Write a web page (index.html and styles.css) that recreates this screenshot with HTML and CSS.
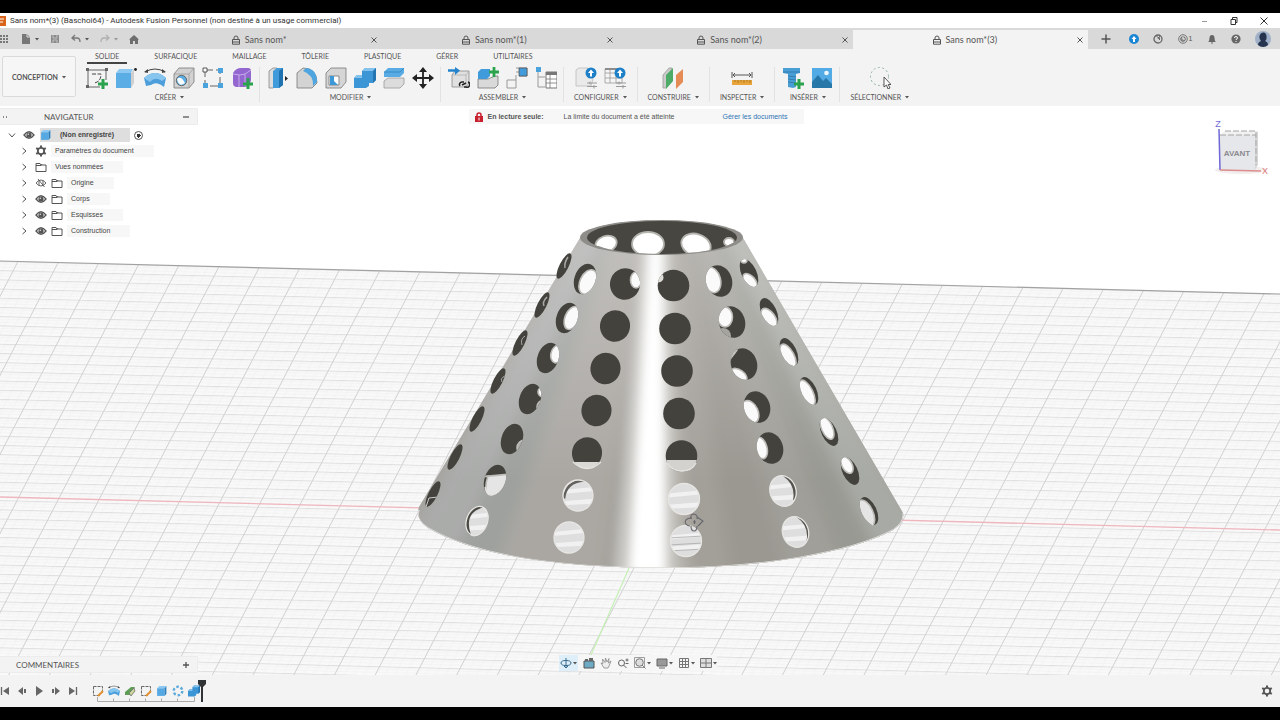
FILE: index.html
```html
<!DOCTYPE html>
<html lang="fr">
<head>
<meta charset="utf-8">
<meta name="viewport" content="width=device-width, initial-scale=1">
<title>Sans nom*(3) - Autodesk Fusion</title>
<link rel="stylesheet" href="styles.css">
</head>
<body>
<svg class="sprite" aria-hidden="true">
  <symbol id="caret" viewBox="0 0 4 4"><path d="M0 1h4L2 3.5z" fill="currentColor"/></symbol>
  <symbol id="lock" viewBox="0 0 10 10"><path d="M1.5 4.5h7v4.700h-7zM3 4.500V3a2 2 0 0 1 4 0v1.500M1.500 7h7" fill="none" stroke="currentColor"/></symbol>
  <symbol id="close" viewBox="0 0 8 8"><path d="M1.500 1.500l5 5M6.500 1.500l-5 5" fill="none" stroke="currentColor"/></symbol>
  <symbol id="cube" viewBox="0 0 22 22"><path d="M2 6l4-4h13l-3 4z" fill="#8cc8f2"/><path d="M2 6h14v14H2z" fill="#55a8e2"/><path d="M16 6l3-4v14l-3 4z" fill="#2d7fbd"/></symbol>
  <symbol id="folder" viewBox="0 0 12 12"><path d="M1 10.500v-8h4l1 1.500h5v6.500zM1 4.500h5l1-1.500" fill="none" stroke="currentColor"/></symbol>
  <symbol id="eye" viewBox="0 0 12 12"><path d="M1 6q5-6.500 10 0q-5 6.500-10 0z" fill="none" stroke="currentColor" stroke-width="1.300"/><circle cx="6" cy="6" r="2.600" fill="currentColor"/><circle cx="5.300" cy="5.300" r=".8" fill="#ddd"/></symbol>
  <symbol id="eye-off" viewBox="0 0 12 12"><path d="M1 6q5-6 10 0q-5 6-10 0zM4 3.500v5M8 3.500v5M3 2l6.500 8" fill="none" stroke="currentColor" stroke-width=".9"/></symbol>
  <symbol id="chev" viewBox="0 0 8 8"><path d="M2.500 1L6 4L2.500 7" fill="none" stroke="currentColor"/></symbol>
  <symbol id="gear" viewBox="0 0 12 12"><circle cx="6" cy="6" r="3.200" fill="none" stroke="currentColor" stroke-width="1.800"/><path d="M6 .5v2M6 9.500v2M1.200 3.200l1.800 1M9 7.800l1.800 1M1.200 8.800L3 7.800M9 4.200l1.800-1" stroke="currentColor" stroke-width="2"/></symbol>

  <symbol id="sketch" viewBox="0 0 22 22"><path d="M2 3h18M2 20h12M2 2v18M20 2v11" fill="none" stroke="#555" stroke-width=".9"/><path d="M0 1h3v3H0zM19 1h3v3h-3zM0 18h3v3H0z" fill="#666"/><path d="M6 7h9q0 8-7 9" fill="none" stroke="#444" stroke-dasharray="4 1.500"/><path d="M17 12v10M12 17h10" stroke="#2ba24c" stroke-width="3"/></symbol>
  <symbol id="extrude" viewBox="0 0 22 22"><path d="M1 6l3-4h14l-2 4z" fill="#8cc8f2"/><path d="M1 6h15v15H1z" fill="#5badE5"/><path d="M16 6l3-4v14l-3 5z" fill="#cfcfcf"/><circle cx="20.500" cy="2.500" r="1.400" fill="#222"/></symbol>
  <symbol id="revolve" viewBox="0 0 22 22"><path d="M1 5Q11-1 21 5" fill="none" stroke="#444"/><path d="M0 5l4-3v4zM22 5l-4-3v4z" fill="#444"/><path d="M0 11Q11 1 22 11l-2 9q-4-3-5-3q-4-2-8 1l-5 1z" fill="#4d9fdb"/><path d="M0 11Q11 1 22 11l-4 3q-7-5-12 1z" fill="#88c5ee"/></symbol>
  <symbol id="hole" viewBox="0 0 22 22"><path d="M1 7l5-6h15v14l-5 6H1z" fill="#d2d2d2" stroke="#777" stroke-width=".8"/><path d="M1 7h15v14M16 7l5-6" fill="none" stroke="#999" stroke-width=".7"/><circle cx="8.500" cy="13.500" r="5.200" fill="#5aaee5" stroke="#666"/><path d="M4 12q4-4 8 4q-6 5-8-4z" fill="#f8fbff"/></symbol>
  <symbol id="pattern" viewBox="0 0 22 22"><path d="M3 3h15v16H3z" fill="none" stroke="#555" stroke-width=".9" stroke-dasharray="8 3"/><path d="M1 1h4v4H1z" fill="#fff" stroke="#555"/><path d="M16 1h5v5h-5zM1 16h5v5H1zM16 16h5v5h-5z" fill="#4aa3dd"/></symbol>
  <symbol id="form" viewBox="0 0 22 22"><path d="M2 6q3-5 8-5h7q3 0 3 3v9q-1 6-6 7H6q-4 0-4-4z" fill="#9367cf"/><path d="M2 7q8 2 12 0l6-4M8 8v12M14 7v12" fill="none" stroke="#c7acec"/><path d="M17 11v11M12 17h10" stroke="#2ba24c" stroke-width="3"/></symbol>
  <symbol id="presspull" viewBox="0 0 22 22"><path d="M2 4l4-3h4v17l-4 3H2z" fill="#ddd" stroke="#888" stroke-width=".8"/><path d="M6 4l4-3h6v17l-4 3H6z" fill="#419bdb"/><path d="M12 4l4-3v17l-4 3z" fill="#1f72b0"/><path d="M18 9l3 2.500-3 2.500z" fill="#222"/></symbol>
  <symbol id="fillet" viewBox="0 0 22 22"><path d="M1 21V6l6-5q14 0 14 15l-5 5z" fill="#d3d3d3" stroke="#777" stroke-width=".8"/><path d="M10 1q11 1 11 14l-4 4Q18 8 7 4z" fill="#4ea5df"/></symbol>
  <symbol id="shell" viewBox="0 0 22 22"><path d="M1 6l5-5h15v14l-5 6H1z" fill="#d5d5d5" stroke="#777" stroke-width=".8"/><path d="M4 9h10v9H4z" fill="#fff" stroke="#888"/><path d="M5 9h4v5l4 4H5z" fill="#3d98d8"/></symbol>
  <symbol id="combine" viewBox="0 0 22 22"><path d="M8 4l3-3h11v12l-3 3h-4v3l-3 2H0V11l3-3h5z" fill="#3c96d6"/><path d="M8 4l3-3h11l-3 3zM0 11l3-3h5v3z" fill="#82c2ec"/><path d="M19 4l3-3v12l-3 3z" fill="#2475b1"/></symbol>
  <symbol id="offset" viewBox="0 0 22 22"><path d="M1 5l4-4h16v5l-4 4H1z" fill="#58abe3"/><path d="M1 5h16l4-4" fill="none" stroke="#2a7db8" stroke-width=".7"/><path d="M1 14l4-3h16v6l-4 4H1z" fill="#dcdcdc" stroke="#999" stroke-width=".8"/></symbol>
  <symbol id="move" viewBox="0 0 22 22"><path d="M11 4v14M4 11h14" stroke="#222" stroke-width="1.800"/><path d="M11 0l4 5H7zM11 22l-4-5h8zM0 11l5-4v8zM22 11l-5 4V7z" fill="#222"/></symbol>
  <symbol id="insert-comp" viewBox="0 0 22 22"><path d="M4 8l3-4h14v12l-3 4H4z" fill="#e0e0e0" stroke="#888" stroke-width=".8"/><path d="M4 8h14v12M18 8l3-4" fill="none" stroke="#aaa" stroke-width=".7"/><path d="M0 3.500h8" stroke="#2384cd" stroke-width="2.500"/><path d="M7 0l5 3.500L7 8z" fill="#2384cd"/><path d="M12 19a2.500 2.500 0 0 1 2-4h2M20 15a2.500 2.500 0 0 1-2 5h-2M14 18l4-2" fill="none" stroke="#222" stroke-width="1.500"/></symbol>
  <symbol id="new-comp" viewBox="0 0 22 22"><path d="M1 12h10l7-3h3v9l-3 3H1z" fill="#d9d9d9" stroke="#777" stroke-width=".8"/><path d="M1 5l3-3h9v7l-3 3H1z" fill="#3f9bda"/><path d="M17 0v10M12 5h10" stroke="#2ba24c" stroke-width="2.800"/></symbol>
  <symbol id="joint" viewBox="0 0 22 22"><path d="M10 13H1v8h9V8M10 5h3" fill="none" stroke="#999"/><path d="M10 1h11v8h-8" fill="none" stroke="#999"/><path d="M13 1h8v8h-8z" fill="#429cdb" stroke="#555" stroke-width=".8"/></symbol>
  <symbol id="bom" viewBox="0 0 22 22"><path d="M1 0h5v5H1z" fill="#4aa3dd"/><path d="M3 5v15h7M3 10h7" fill="none" stroke="#999"/><path d="M11 5h11v16H11z" fill="#fff" stroke="#777"/><path d="M11 5h11v3H11z" fill="#777"/><path d="M11 12h11M11 16h11M15 8v13" stroke="#777" stroke-width=".8"/></symbol>
  <symbol id="config" viewBox="0 0 22 22"><path d="M1 3l3-2h9v5l5 6-2 7H1z" fill="#eaeaea" stroke="#bbb" stroke-width=".8"/><circle cx="16" cy="6" r="5.500" fill="#1c7fc7"/><path d="M16 2.500l3 3.500h-2v3.500h-2V6h-2z" fill="#fff"/><path d="M12 16h10M12 19.500h10M15 14.500v3M19 18v3.500" stroke="#999"/></symbol>
  <symbol id="config-table" viewBox="0 0 22 22"><path d="M1 2h17v14H1zM1 6h17M1 11h17M6 2v14M12 2v14" fill="#f5f5f5" stroke="#999" stroke-width=".8"/><path d="M1 1h15v2H1z" fill="#8c8c8c"/><circle cx="16" cy="6" r="5.500" fill="#1c7fc7"/><path d="M16 2.500l3 3.500h-2v3.500h-2V6h-2z" fill="#fff"/><path d="M12 16h10M12 19.500h10M15 14.500v3M19 18v3.500" stroke="#999"/></symbol>
  <symbol id="plane" viewBox="0 0 22 22"><path d="M1 8l6-7h3v13l-6 7H1z" fill="#ccc" stroke="#999" stroke-width=".8"/><path d="M4 8l7-7v13l-7 8z" fill="#4cab67"/><path d="M14 8l7-6v13l-7 7z" fill="#e58b55"/></symbol>
  <symbol id="measure" viewBox="0 0 22 22"><path d="M1 5v6M21 5v6M2 8h18M4 6L2 8l2 2M18 6l2 2-2 2" fill="none" stroke="#555"/><path d="M1 13h20v5H1z" fill="#e7a53b"/><path d="M4 13v2M7 13v3M10 13v2M13 13v3M16 13v2M19 13v3" stroke="#8b5d10" stroke-width=".6"/></symbol>
  <symbol id="screw" viewBox="0 0 22 22"><path d="M1 1h17v5l-4 1v13l-3 1-5-1V7L1 6z" fill="#4a9ed6"/><path d="M6 9l8 1M6 12l8 1M6 15l8 1M1 5h17" stroke="#286f9f" stroke-width=".7"/><path d="M17 12v10M12 17h10" stroke="#2ba24c" stroke-width="3"/></symbol>
  <symbol id="image" viewBox="0 0 22 22"><path d="M1 1h20v20H1z" fill="#52abe4"/><path d="M1 15l6-7 5 6 3-3 6 6v4H1z" fill="#2777a8"/><circle cx="15.500" cy="6" r="2.300" fill="#eef8ff"/></symbol>
  <symbol id="select" viewBox="0 0 22 22"><circle cx="10.500" cy="9.500" r="9" fill="none" stroke="#8fb0a6" stroke-dasharray="2 2.500"/><path d="M15 10v10l2.500-2 1.500 4 2-1-1.800-3.500H22z" fill="#fff" stroke="#444" stroke-width=".9"/></symbol>
</svg>

<main class="app">
  <header class="titlebar">
    <svg class="app-logo" viewBox="0 0 6 10"><path d="M0 0h6v10H0z" fill="#d9651d"/><path d="M0 3h4M0 6h3" stroke="#fff"/></svg>
    <h1 class="window-title">Sans nom*(3) (Baschoi64) - Autodesk Fusion Personnel (non destiné à un usage commercial)</h1>
    <div class="window-controls">
      <button aria-label="Réduire"><svg class="i8" viewBox="0 0 8 8"><path d="M2 4.500h5" stroke="#999"/></svg></button>
      <button aria-label="Restaurer"><svg class="i8" viewBox="0 0 8 8"><path d="M1 2.500h4.500v5H1zM2.500 2.500v-2H7v5H5.500" fill="none" stroke="#333"/></svg></button>
      <button aria-label="Fermer"><svg class="i8" viewBox="0 0 8 8"><path d="M.5.500l7 7M7.500.5l-7 7" stroke="#333"/></svg></button>
    </div>
  </header>

  <div class="docbar">
    <div class="quick">
      <button aria-label="Panneau"><svg class="i10" viewBox="0 0 10 10"><path d="M0 1h2v2H0zM3 1h2v2H3zM6 1h2v2H6zM0 4h2v2H0zM3 4h2v2H3zM6 4h2v2H6zM0 7h2v2H0zM3 7h2v2H3zM6 7h2v2H6z" fill="#777"/></svg></button>
      <button aria-label="Fichier"><svg class="i10" viewBox="0 0 10 10"><path d="M1 0h5l3 3v7H1z" fill="#777"/><path d="M6 0v3h3" fill="none" stroke="#ddd"/></svg><svg class="caret"><use href="#caret"/></svg></button>
      <button aria-label="Enregistrer"><svg class="i10" viewBox="0 0 10 10"><path d="M1 1h8v8H1z" fill="#8b8b8b"/><path d="M3 1v3h4V1M3 9V6h4v3" fill="none" stroke="#ccc" stroke-width=".8"/></svg></button>
      <button aria-label="Annuler"><svg class="i10" viewBox="0 0 10 10"><path d="M4 1L1 4l3 2.500M1 4h5q3 0 3 4" fill="none" stroke="#777" stroke-width="1.300"/></svg><svg class="caret"><use href="#caret"/></svg></button>
      <button class="off" aria-label="Rétablir"><svg class="i10" viewBox="0 0 10 10"><path d="M6 1l3 3-3 2.500M9 4H4Q1 4 1 8" fill="none" stroke="#888" stroke-width="1.300"/></svg><svg class="caret"><use href="#caret"/></svg></button>
      <button aria-label="Accueil"><svg class="i10" viewBox="0 0 10 10"><path d="M5 1l5 4.500H9V10H6V7H4v3H1V5.500H0z" fill="#6e6e6e"/></svg></button>
    </div>
    <nav class="doctabs" aria-label="Documents">
      <div class="doctab"><button class="doc-name"><svg class="i10"><use href="#lock"/></svg>Sans nom*</button><button class="doc-close" aria-label="Fermer l’onglet"><svg class="i8"><use href="#close"/></svg></button></div>
      <div class="doctab"><button class="doc-name"><svg class="i10"><use href="#lock"/></svg>Sans nom*(1)</button><button class="doc-close" aria-label="Fermer l’onglet"><svg class="i8"><use href="#close"/></svg></button></div>
      <div class="doctab"><button class="doc-name"><svg class="i10"><use href="#lock"/></svg>Sans nom*(2)</button><button class="doc-close" aria-label="Fermer l’onglet"><svg class="i8"><use href="#close"/></svg></button></div>
      <div class="doctab current"><button class="doc-name"><svg class="i10"><use href="#lock"/></svg>Sans nom*(3)</button><button class="doc-close" aria-label="Fermer l’onglet"><svg class="i8"><use href="#close"/></svg></button></div>
    </nav>
    <div class="account">
      <button class="new-doc" aria-label="Nouveau document"><svg class="i10" viewBox="0 0 10 10"><path d="M5 .5v9M.5 5h9" stroke="#555" stroke-width="1.500"/></svg></button>
      <button aria-label="Mises à jour"><svg class="i10" viewBox="0 0 10 10"><circle cx="5" cy="5" r="5" fill="#1a86d4"/><path d="M5 2l2.500 3H6v3H4V5H2.500z" fill="#fff"/></svg></button>
      <button aria-label="Extensions"><svg class="i10" viewBox="0 0 10 10"><circle cx="5" cy="5" r="4" fill="none" stroke="#666" stroke-width="1.300"/><path d="M3.500 2.500L6.500 4V6M7 2l-2 3" fill="none" stroke="#666"/></svg></button>
      <button class="jobs" aria-label="État des tâches"><svg class="i10" viewBox="0 0 10 10"><circle cx="5" cy="5" r="4.300" fill="none" stroke="#777"/><circle cx="5" cy="5" r="2.300" fill="#999" stroke="#666"/><path d="M5 2.500V5h2" fill="none" stroke="#eee"/></svg>1</button>
      <button aria-label="Notifications"><svg class="i10" viewBox="0 0 10 10"><path d="M1 8q1.500-1 1.500-4Q2.500 1 5 1t2.500 3Q7.500 7 9 8zM4 8.500h2v1H4z" fill="#666"/></svg></button>
      <button aria-label="Aide"><svg class="i10" viewBox="0 0 10 10"><circle cx="5" cy="5" r="4.600" fill="#666"/><path d="M3.500 4q0-1.500 1.500-1.500T6.500 4Q6.500 5 5 5.500V6M5 7v1" fill="none" stroke="#fff"/></svg></button>
      <button aria-label="Profil"><svg class="i16" viewBox="0 0 16 16"><circle cx="8" cy="8" r="8" fill="#9fb0c8"/><path d="M3 14q0-3 3-4Q4 8 4.500 5T8 1.500 11.500 5 10 10q3 1 3 4-5 4-10 0z" fill="#26344f"/></svg></button>
    </div>
  </div>

  <section class="ribbon" aria-label="Barre d’outils">
    <button class="workspace">CONCEPTION<svg class="caret"><use href="#caret"/></svg></button>
    <div class="ribbon-body">
      <nav class="ribbon-tabs" aria-label="Onglets d’outils">
        <button class="current">SOLIDE</button><button>SURFACIQUE</button><button>MAILLAGE</button><button>TÔLERIE</button><button>PLASTIQUE</button><button>GÉRER</button><button>UTILITAIRES</button>
      </nav>
      <div class="groups">
        <div class="group"><div class="tools">
          <button aria-label="Esquisse"><svg class="i22"><use href="#sketch"/></svg></button><button aria-label="Extrusion"><svg class="i22"><use href="#extrude"/></svg></button><button aria-label="Révolution"><svg class="i22"><use href="#revolve"/></svg></button><button aria-label="Trou"><svg class="i22"><use href="#hole"/></svg></button><button aria-label="Réseau"><svg class="i22"><use href="#pattern"/></svg></button><button aria-label="Forme"><svg class="i22"><use href="#form"/></svg></button>
        </div><button class="group-name">CRÉER<svg class="caret"><use href="#caret"/></svg></button></div>
        <div class="group"><div class="tools">
          <button aria-label="Appuyer/Tirer"><svg class="i22"><use href="#presspull"/></svg></button><button aria-label="Congé"><svg class="i22"><use href="#fillet"/></svg></button><button aria-label="Coque"><svg class="i22"><use href="#shell"/></svg></button><button aria-label="Combiner"><svg class="i22"><use href="#combine"/></svg></button><button aria-label="Décaler la face"><svg class="i22"><use href="#offset"/></svg></button><button aria-label="Déplacer"><svg class="i22"><use href="#move"/></svg></button>
        </div><button class="group-name">MODIFIER<svg class="caret"><use href="#caret"/></svg></button></div>
        <div class="group"><div class="tools">
          <button aria-label="Insérer un composant"><svg class="i22"><use href="#insert-comp"/></svg></button><button aria-label="Nouveau composant"><svg class="i22"><use href="#new-comp"/></svg></button><button aria-label="Liaison"><svg class="i22"><use href="#joint"/></svg></button><button aria-label="Nomenclature"><svg class="i22"><use href="#bom"/></svg></button>
        </div><button class="group-name">ASSEMBLER<svg class="caret"><use href="#caret"/></svg></button></div>
        <div class="group wide"><div class="tools">
          <button aria-label="Configurer la conception"><svg class="i22"><use href="#config"/></svg></button><button aria-label="Table de configuration"><svg class="i22"><use href="#config-table"/></svg></button>
        </div><button class="group-name">CONFIGURER<svg class="caret"><use href="#caret"/></svg></button></div>
        <div class="group wide"><div class="tools"><button aria-label="Plan de décalage"><svg class="i22"><use href="#plane"/></svg></button></div><button class="group-name">CONSTRUIRE<svg class="caret"><use href="#caret"/></svg></button></div>
        <div class="group wide"><div class="tools"><button aria-label="Mesurer"><svg class="i22"><use href="#measure"/></svg></button></div><button class="group-name">INSPECTER<svg class="caret"><use href="#caret"/></svg></button></div>
        <div class="group"><div class="tools"><button aria-label="Insérer une fixation"><svg class="i22"><use href="#screw"/></svg></button><button aria-label="Insérer une image"><svg class="i22"><use href="#image"/></svg></button></div><button class="group-name">INSÉRER<svg class="caret"><use href="#caret"/></svg></button></div>
        <div class="group wide"><div class="tools"><button aria-label="Sélection"><svg class="i22"><use href="#select"/></svg></button></div><button class="group-name">SÉLECTIONNER<svg class="caret"><use href="#caret"/></svg></button></div>
      </div>
    </div>
  </section>

  <section class="viewport" aria-label="Vue 3D">
    <svg class="scene" viewBox="0 106 1280 569" preserveAspectRatio="xMidYMid slice">
      <defs>
        <pattern id="grid" width="40.200" height="9.080" patternUnits="userSpaceOnUse" patternTransform="matrix(1 .0256 -.515 1 17.500 261.400)">
          <path d="M0 3h40.200M0 6h40.200M10 0v9.080M20 0v9.080M30 0v9.080" stroke="#f0f0f0" stroke-width=".6"/>
          <path d="M0 .5h40.200" stroke="#dfdfdf" stroke-width=".9"/>
          <path d="M.5 0v9.080" stroke="#d0d0d0"/>
        </pattern>
        <clipPath id="body"><path d="M580 238L419 507Q415 519 428 528C480 558 570 568 665 568C760 568 850 553 893 530Q905 522 903 513L743 238Q735 222 661 220Q588 222 580 238z"/></clipPath>
        <clipPath id="mouth"><ellipse cx="662" cy="237.500" rx="75" ry="16.500"/></clipPath>
        <clipPath id="cC"><circle r="15.800"/></clipPath>
        <clipPath id="cL"><ellipse rx="15" ry="15.700" transform="rotate(15)"/></clipPath>
        <clipPath id="cO"><ellipse rx="10.500" ry="15.700" transform="rotate(20)"/></clipPath>
        <clipPath id="cF"><ellipse rx="4.500" ry="14" transform="rotate(27)"/></clipPath>
        <clipPath id="cR"><ellipse rx="13" ry="16" transform="rotate(-18)"/></clipPath>
        <clipPath id="cS"><ellipse rx="7.500" ry="15" transform="rotate(-25)"/></clipPath>
        <linearGradient id="lift" x1="0" y1="0" x2="0" y2="1"><stop offset="0" stop-color="#fff" stop-opacity=".3"/><stop offset=".75" stop-color="#fff" stop-opacity="0"/></linearGradient>
        <filter id="soft" x="-10%" y="-10%" width="120%" height="120%"><feGaussianBlur stdDeviation="7"/></filter>
        <filter id="glow" x="-100%" y="-10%" width="300%" height="120%"><feGaussianBlur stdDeviation="5"/></filter>
        <g id="floor"><path d="M-20-20h40v40h-40z" fill="#dededf"/><path d="M-20-5l40-4v4l-40 4zM-20 6l40-3v5l-40 2z" fill="#f1f1f2"/></g>
        <g id="dark"><path d="M-20-20h40v40h-40z" fill="#43423d"/></g>
      </defs>
      <path d="M0 106h1280v569H0z" fill="#fff"/>
      <path d="M0 261L1280 294V675H0z" fill="#f9f9f9"/>
      <path d="M0 261L1280 294V675H0z" fill="url(#grid)"/>
      <path d="M0 261L1280 294" stroke="#a2a2a2" stroke-width="1.200"/>
      <path d="M0 497L1280 530" stroke="#eeb6bd" stroke-width="1.300"/>
      <path d="M629 568L591 655" stroke="#c4f0b4" stroke-width="1.200"/>

      <g clip-path="url(#body)">
        <path d="M400 200h520v380H400z" fill="#a4a19c"/>
        <g filter="url(#soft)">
          <path d="M661 103L370 600H440z" fill="#aaacaa"/>
          <path d="M661 103L435 600H490z" fill="#9fa19e"/>
          <path d="M661 103L485 600H555z" fill="#aaa7a3"/>
          <path d="M661 103L550 600H600z" fill="#aba7a2"/>
          <path d="M661 103L598 600H622z" fill="#a5a39e"/>
          <path d="M661 103L664 600H695z" fill="#b8b5af"/>
          <path d="M661 103L690 600H740z" fill="#a39f99"/>
          <path d="M661 103L735 600H800z" fill="#9b9892"/>
          <path d="M661 103L795 600H860z" fill="#a09f99"/>
          <path d="M661 103L855 600H905z" fill="#989992"/>
          <path d="M661 103L900 600H960z" fill="#a8aaa5"/>
        </g>
        <g filter="url(#glow)">
          <path d="M645 200L612 600H676L668 200z" fill="#d6d5d1" opacity=".7"/>
          <path d="M652 200L627 600H666L662 200z" fill="#fff"/>
        </g>
        <path d="M400 220h520v350H400z" fill="url(#lift)"/>
        <path d="M419 510Q415 520 428 528C480 558 570 568 665 568C760 568 850 553 893 530Q905 522 903 513" fill="none" stroke="#dededa" stroke-width="1.500"/>
      </g>
      <ellipse cx="661.500" cy="237.500" rx="81.500" ry="17.500" fill="#8e8d89"/>
      <g clip-path="url(#mouth)">
        <path d="M580 215h165v45H580z" fill="#474641"/>
        <g fill="#fff" stroke="#b4b3ae" stroke-width="1.800">
          <ellipse cx="606" cy="244" rx="11" ry="8" transform="rotate(-20 606 244)"/><ellipse cx="648" cy="244" rx="16" ry="12"/><ellipse cx="696" cy="245" rx="15" ry="11" transform="rotate(18 696 245)"/><ellipse cx="729" cy="242" rx="5" ry="4"/>
        </g>
      </g>

      <g transform="translate(564 266)" clip-path="url(#cF)"><use href="#dark"/><path d="M4-9q-4 6-3 11" fill="none" stroke="#aaa" stroke-width="1.500"/></g>
      <g transform="translate(542 305)" clip-path="url(#cF)"><use href="#dark"/><path d="M5-8q-5 5-3 9" fill="none" stroke="#aaa" stroke-width="1.500"/></g>
      <g transform="translate(520 343)" clip-path="url(#cF)"><use href="#dark"/><path d="M5-7q-5 3-3 9" fill="none" stroke="#aaa"/></g>
      <g transform="translate(498 381)" clip-path="url(#cF)"><use href="#dark"/><path d="M7-5q-5 2-3 6" fill="none" stroke="#aaa"/></g>
      <g transform="translate(477 419)" clip-path="url(#cF)"><use href="#dark"/></g>
      <g transform="translate(455 457)" clip-path="url(#cF)"><use href="#dark"/></g>
      <g transform="translate(433 494)" clip-path="url(#cF)"><use href="#dark"/><path d="M5 3l-9 1-3 9" fill="none" stroke="#ccc"/></g>

      <g fill="#fafafa" stroke="#bdbcb8" stroke-width="1.600">
        <g transform="translate(585 279)" clip-path="url(#cO)"><use href="#dark" stroke="none"/><ellipse cx="3" cy="3" rx="8" ry="13" transform="rotate(25 3 3)"/></g>
        <g transform="translate(567 318)" clip-path="url(#cO)"><use href="#dark" stroke="none"/><ellipse cx="5" cy="0" rx="7" ry="12" transform="rotate(22 5 0)"/></g>
        <g transform="translate(548 358)" clip-path="url(#cO)"><use href="#dark" stroke="none"/><ellipse cx="9" cy="-4" rx="6" ry="9" transform="rotate(15 9 -4)"/></g>
        <g transform="translate(530 399)" clip-path="url(#cO)"><use href="#dark" stroke="none"/><circle cx="13" cy="-7" r="5"/><circle cx="14" cy="8" r="7" fill="#adaba8"/></g>
        <g transform="translate(512 439)" clip-path="url(#cO)"><use href="#dark" stroke="none"/><circle cx="13" cy="9" r="8" fill="#adaba8"/></g>
        <g transform="translate(495 480)" clip-path="url(#cO)"><use href="#dark" stroke="none"/><path d="M-16 -3L16-6V18H-8Q-11 7-7-4z" fill="#e5e5e6"/></g>
        <g transform="translate(477 521)" clip-path="url(#cO)"><use href="#floor" stroke="none"/><path d="M8-14q-22 5-14 28l-8 2v-32z" fill="#4b4a45" stroke="none"/></g>
        <g transform="translate(625 284)" clip-path="url(#cL)"><use href="#dark" stroke="none"/><ellipse cx="11" cy="-4" rx="5.500" ry="8"/></g>
        <g transform="translate(719 281)" clip-path="url(#cR)"><use href="#dark" stroke="none"/><ellipse cx="-7" cy="-1" rx="8.500" ry="13" transform="rotate(-15 -7 -1)"/></g>
        <g transform="translate(732 322)" clip-path="url(#cR)"><use href="#dark" stroke="none"/><ellipse cx="-7" cy="-5" rx="7.500" ry="10"/><circle cx="-9" cy="14" r="8" fill="#a6a49f" stroke="none"/></g>
        <g transform="translate(744 364)" clip-path="url(#cR)"><use href="#dark" stroke="none"/><path d="M-13-6q4-5 6-8l-10-3v17z"/><ellipse cx="-5" cy="11" rx="9" ry="5" transform="rotate(35 -5 11)"/></g>
        <g transform="translate(757 407)" clip-path="url(#cR)"><use href="#dark" stroke="none"/><ellipse cx="-7" cy="5" rx="8" ry="12" transform="rotate(-25 -7 5)"/></g>
        <g transform="translate(770 448)" clip-path="url(#cR)"><use href="#dark" stroke="none"/><ellipse cx="-9" cy="0" rx="6" ry="11" transform="rotate(-15 -9 0)"/></g>
        <g transform="translate(749 273)" clip-path="url(#cS)"><use href="#dark" stroke="none"/><ellipse cx="1" cy="8" rx="5" ry="9" transform="rotate(-42 1 8)"/><circle cx="-5" cy="-13" r="3"/></g>
        <g transform="translate(769 312)" clip-path="url(#cS)"><use href="#dark" stroke="none"/><ellipse cx="0" cy="6" rx="6" ry="11" transform="rotate(-35 0 6)"/></g>
        <g transform="translate(789 352)" clip-path="url(#cS)"><use href="#dark" stroke="none"/><ellipse cx="-1" cy="4" rx="6" ry="13" transform="rotate(-28 -1 4)"/></g>
        <g transform="translate(809 391)" clip-path="url(#cS)"><use href="#dark" stroke="none"/><ellipse cx="-2" cy="2" rx="6" ry="14" transform="rotate(-26 -2 2)"/></g>
        <g transform="translate(829 432)" clip-path="url(#cS)"><use href="#dark" stroke="none"/><ellipse cx="-2" cy="-4" rx="5.500" ry="12" transform="rotate(-24 -2 -4)"/></g>
        <g transform="translate(850 471)" clip-path="url(#cS)"><use href="#dark" stroke="none"/><ellipse cx="-3" cy="-6" rx="5" ry="9" transform="rotate(-28 -3 -6)"/></g>
        <g transform="translate(869 511)" clip-path="url(#cS)"><use href="#dark" stroke="none"/><ellipse cx="-3" cy="2" rx="7" ry="14" transform="rotate(-25 -3 2)" fill="#e5e5e6"/></g>
      </g>
      <g transform="translate(615 326)" clip-path="url(#cL)"><use href="#dark"/></g>
      <g transform="translate(605.500 368.500)" clip-path="url(#cL)"><use href="#dark"/></g>
      <g transform="translate(596.500 410.500)" clip-path="url(#cL)"><use href="#dark"/></g>
      <g transform="translate(587 453)" clip-path="url(#cL)"><use href="#dark"/><path d="M-20 9h40v12h-40z" fill="#dad9d6"/></g>
      <g transform="translate(578 495.500)" clip-path="url(#cL)"><use href="#floor"/><path d="M6-15Q-12-14-14 3" fill="none" stroke="#63615c" stroke-width="2.500"/></g>
      <g transform="translate(569 537.500)" clip-path="url(#cL)"><use href="#floor"/></g>
      <g transform="translate(673.500 285.500)" clip-path="url(#cC)"><use href="#dark"/><circle cx="-15" cy="-8" r="5" fill="#deddd9"/></g>
      <g transform="translate(675 328.500)" clip-path="url(#cC)"><use href="#dark"/></g>
      <g transform="translate(677 371)" clip-path="url(#cC)"><use href="#dark"/></g>
      <g transform="translate(679 413.500)" clip-path="url(#cC)"><use href="#dark"/></g>
      <g transform="translate(681.500 456)" clip-path="url(#cC)"><use href="#dark"/><path d="M-20 4h40v15h-40z" fill="#d3d2cf"/></g>
      <g transform="translate(684 499)" clip-path="url(#cC)"><use href="#floor"/></g>
      <g transform="translate(686 541)" clip-path="url(#cC)"><use href="#floor"/><path d="M-18-3l36-2M-18 4l36-2M-18 10l36-2" stroke="#aaa" stroke-width=".8"/></g>
      <g transform="translate(783 491)" clip-path="url(#cR)"><use href="#floor"/><path d="M0-15q13 9 10 24l8-3v-24z" fill="#57554f"/></g>
      <g transform="translate(795.500 532)" clip-path="url(#cR)"><use href="#floor"/><path d="M1-15q13 9 10 24l8-3v-24z" fill="#57554f"/></g>
      <g fill="none" stroke="#e6e5e2" stroke-width="1.300">
        <ellipse cx="578" cy="495.500" rx="15" ry="15.500"/><ellipse cx="569" cy="537.500" rx="15" ry="15.500"/>
        <circle cx="684" cy="499" r="15.500"/><circle cx="686" cy="541" r="15.500"/>
        <ellipse cx="783" cy="491" rx="13" ry="15.500" transform="rotate(-18 783 491)"/><ellipse cx="795.500" cy="532" rx="13" ry="15.500" transform="rotate(-18 795.500 532)"/>
        <ellipse cx="477" cy="521" rx="10.500" ry="15" transform="rotate(20 477 521)"/>
        <path d="M485 487q2 9 7 8 8-2 12-14M573 462q14 13 28 0M667 463q5 8 15 8t14-8M861 502q1 15 12 23"/>
      </g>
      <path d="M690 526a5 3.500 0 1 1 2-8M697 517l6 4-5 5M691 519q-1-5 3-5 4 1 3 5M691 526q0 5 3 5t3-5M693 522h3M694.500 520v4" fill="none" stroke="#66666c" stroke-width="1.100"/>
    </svg>

    <aside class="browser">
      <header class="panel-head"><span class="grip"></span><h2>NAVIGATEUR</h2><button class="end" aria-label="Réduire le navigateur"><svg class="i8" viewBox="0 0 8 8"><path d="M1 4h6" stroke="#555" stroke-width="1.300"/></svg></button></header>
      <ul class="tree">
        <li class="root"><button aria-label="Développer"><svg class="i8 down"><use href="#chev"/></svg></button><svg class="i12"><use href="#eye"/></svg><span class="chip"><svg class="i12"><use href="#cube"/></svg>(Non enregistré)</span><label class="activate"><input type="radio" name="active" aria-label="Activer le composant" checked></label></li>
        <li><button aria-label="Développer"><svg class="i8"><use href="#chev"/></svg></button><svg class="i12"><use href="#gear"/></svg><span class="chip">Paramètres du document</span></li>
        <li><button aria-label="Développer"><svg class="i8"><use href="#chev"/></svg></button><svg class="i12"><use href="#folder"/></svg><span class="chip">Vues nommées</span></li>
        <li><button aria-label="Développer"><svg class="i8"><use href="#chev"/></svg></button><svg class="i12"><use href="#eye-off"/></svg><svg class="i12"><use href="#folder"/></svg><span class="chip">Origine</span></li>
        <li><button aria-label="Développer"><svg class="i8"><use href="#chev"/></svg></button><svg class="i12"><use href="#eye"/></svg><svg class="i12"><use href="#folder"/></svg><span class="chip">Corps</span></li>
        <li><button aria-label="Développer"><svg class="i8"><use href="#chev"/></svg></button><svg class="i12"><use href="#eye"/></svg><svg class="i12"><use href="#folder"/></svg><span class="chip">Esquisses</span></li>
        <li><button aria-label="Développer"><svg class="i8"><use href="#chev"/></svg></button><svg class="i12"><use href="#eye"/></svg><svg class="i12"><use href="#folder"/></svg><span class="chip">Construction</span></li>
      </ul>
    </aside>

    <div class="banner">
      <svg class="i10" viewBox="0 0 10 10"><path d="M1 4h8v6H1z" fill="#c8202f"/><path d="M3 4V3a2 2 0 0 1 4 0v1" fill="none" stroke="#c8202f" stroke-width="1.500"/><path d="M5 5.500v3" stroke="#fff"/></svg>
      <strong>En lecture seule:</strong><span>La limite du document a été atteinte</span><a href="#documents">Gérer les documents</a>
    </div>

    <svg class="viewcube" viewBox="0 0 64 64" role="img" aria-label="Vue avant">
      <ellipse cx="33" cy="54" rx="26" ry="4" fill="#f2eeee"/>
      <path d="M12 19h35v35H12z" fill="#e6e7ea"/><path d="M12 19l5-4h33l-3 4z" fill="#f1f1f1"/><path d="M47 19l3-4v34l-3 5z" fill="#d8d8da"/>
      <path d="M12 19h36M17 15h31v34" fill="none" stroke="#a5a5a5" stroke-dasharray="6 2"/>
      <path d="M11 13l1 41" stroke="#7068d6" stroke-width="1.500"/><path d="M12 54l41 1" stroke="#dc8c8c" stroke-width="1.300"/>
      <text x="29" y="40" class="cube-face">AVANT</text><text x="10" y="11" class="cube-z">Z</text><text x="57" y="58" class="cube-x">X</text>
    </svg>

    <section class="comments panel-head"><h2>COMMENTAIRES</h2><button class="end" aria-label="Ajouter un commentaire"><svg class="i8" viewBox="0 0 8 8"><path d="M4 1v6M1 4h6" stroke="#555" stroke-width="1.300"/></svg></button></section>

    <div class="navtools">
      <button class="active" aria-label="Orbite"><svg class="i12" viewBox="0 0 12 12"><ellipse cx="6" cy="6" rx="5" ry="2.500" fill="none" stroke="#386b8c"/><path d="M6 1v9M4 9l2 2 2-2" fill="none" stroke="#386b8c"/></svg><svg class="caret"><use href="#caret"/></svg></button>
      <button aria-label="Regarder"><svg class="i12" viewBox="0 0 12 12"><path d="M1 4h10v7H1z" fill="#6eaac4" stroke="#555"/><path d="M2 2h3v2H2zM6 1h4v3H6z" fill="#666"/></svg></button>
      <button aria-label="Panoramique"><svg class="i12" viewBox="0 0 12 12"><path d="M4 11L1 6l2 .5L2.500 2 5 5.500 5.500 1 7 5l2-3.500L8.500 6 11 4 9 9l-1 2z" fill="#eee" stroke="#888" stroke-width=".8"/></svg></button>
      <button aria-label="Zoom"><svg class="i12" viewBox="0 0 12 12"><circle cx="4.500" cy="6" r="3" fill="none" stroke="#666"/><path d="M6.500 8l3 3M8.500 3h3M10 1.500v3M8.500 6.500h3" stroke="#666"/></svg></button>
      <button aria-label="Ajuster"><svg class="i12" viewBox="0 0 12 12"><path d="M.5.500h10v10H.5z" fill="none" stroke="#888" stroke-width=".8"/><circle cx="5.500" cy="5.500" r="3.800" fill="#ddd" stroke="#777"/><path d="M8 8l3.500 3.500" stroke="#777"/></svg><svg class="caret"><use href="#caret"/></svg></button>
      <button aria-label="Affichage"><svg class="i12" viewBox="0 0 12 12"><path d="M1 2h10v7H1z" fill="#999" stroke="#666"/><path d="M3 11h6" stroke="#666"/></svg><svg class="caret"><use href="#caret"/></svg></button>
      <button aria-label="Grille"><svg class="i12" viewBox="0 0 12 12"><path d="M1.500 1.500h9v9h-9zM1.500 4.500h9M1.500 7.500h9M4.500 1.500v9M7.500 1.500v9" fill="none" stroke="#777"/></svg><svg class="caret"><use href="#caret"/></svg></button>
      <button aria-label="Fenêtres"><svg class="i12" viewBox="0 0 12 12"><path d="M.5 1.500h11v9H.5zM.5 6h11M6 1.500v9" fill="#ddd" stroke="#777"/></svg><svg class="caret"><use href="#caret"/></svg></button>
    </div>
  </section>

  <footer class="timeline">
    <div class="playback">
      <button aria-label="Début"><svg class="i10" viewBox="0 0 10 10"><path d="M1.500 1v8" stroke="#666" stroke-width="1.300"/><path d="M9 1v8L3 5z" fill="#666"/></svg></button>
      <button aria-label="Précédent"><svg class="i10" viewBox="0 0 10 10"><path d="M6 1v8L1 5zM7 3h2v4H7z" fill="#666"/></svg></button>
      <button aria-label="Lecture"><svg class="i10" viewBox="0 0 10 10"><path d="M2 0v10l7-5z" fill="#666"/></svg></button>
      <button aria-label="Suivant"><svg class="i10" viewBox="0 0 10 10"><path d="M4 1v8l5-4zM1 3h2v4H1z" fill="#666"/></svg></button>
      <button aria-label="Fin"><svg class="i10" viewBox="0 0 10 10"><path d="M8.500 1v8" stroke="#666" stroke-width="1.300"/><path d="M1 1v8l6-4z" fill="#666"/></svg></button>
    </div>
    <div class="history">
      <div class="features">
        <button aria-label="Esquisse 1"><svg class="i12" viewBox="0 0 12 12"><path d="M1.500 1.500h9v6M1.500 1.500v9h6" fill="none" stroke="#666" stroke-dasharray="3 1"/><path d="M6 11l5-5" stroke="#e2902e" stroke-width="2"/></svg></button>
        <button aria-label="Révolution 1"><svg class="i12"><use href="#revolve"/></svg></button>
        <button aria-label="Plan 1"><svg class="i12" viewBox="0 0 12 12"><path d="M1 7l6-5h4L6 10H1z" fill="#5f9e57"/><path d="M5 8l5-5 1 3-4 5z" fill="#c8d49c" stroke="#666" stroke-width=".7"/></svg></button>
        <button aria-label="Esquisse 2"><svg class="i12" viewBox="0 0 12 12"><path d="M1.500 1.500h9v6M1.500 1.500v9h6" fill="none" stroke="#666" stroke-dasharray="3 1"/><path d="M6 11l5-5" stroke="#e2902e" stroke-width="2"/></svg></button>
        <button aria-label="Extrusion 1"><svg class="i12"><use href="#cube"/></svg></button>
        <button aria-label="Réseau 1"><svg class="i12" viewBox="0 0 12 12"><circle cx="6" cy="6" r="4.300" fill="none" stroke="#58a9dc" stroke-width="2.400" stroke-dasharray="2.500 2"/></svg></button>
        <button aria-label="Combiner 1"><svg class="i12"><use href="#combine"/></svg></button>
      </div>
      <svg class="bracket" viewBox="0 0 98 5"><path d="M.5 0v4.500h97V0M16.500 1.500v3M32.500 1.500v3M48.500 1.500v3M64.500 1.500v3M80.500 1.500v3" fill="none" stroke="#aaa"/></svg>
    </div>
    <svg class="marker" viewBox="0 0 10 22"><path d="M1 0h8v4L6 7v15H4V7L1 4z" fill="#2f3336"/></svg>
    <button class="end" aria-label="Paramètres"><svg class="i12"><use href="#gear"/></svg></button>
  </footer>
</main>
</body>
</html>
```

FILE: styles.css
```css
* { box-sizing: border-box; }

body {
  margin: 0;
  padding: 13px 0;
  background: #000;
  color: #555;
  font-family: "Liberation Sans", Arial, sans-serif;
  font-size: 7px;
  line-height: 10px;
}

button {
  display: inline-flex;
  align-items: center;
  justify-content: center;
  padding: 0;
  border: 0;
  background: none;
  color: inherit;
  font: inherit;
}

svg { flex: none; display: block; }
h1, h2 { margin: 0; font-weight: 400; }

.sprite { width: 0; height: 0; position: absolute; }
.i8 { width: 8px; height: 8px; }
.i10 { width: 10px; height: 10px; }
.i12 { width: 12px; height: 12px; }
.i16 { width: 16px; height: 16px; }
.i22 { width: 22px; height: 22px; }
.caret { width: 4px; height: 4px; margin-left: 4px; }
.end { margin-left: auto; }

.app {
  display: flex;
  flex-direction: column;
  height: calc(100vh - 26px);
  background: #fff;
}

/* Title bar */
.titlebar { display: flex; align-items: center; height: 15px; padding-right: 12px; }
.app-logo { width: 6px; height: 10px; }
.window-title {
  flex: 1;
  margin-left: 4px;
  color: #333;
  font-family: Roboto, sans-serif;
  font-size: 8px;
}
.window-controls { display: flex; gap: 22px; }

/* Document tabs */
.docbar { display: flex; height: 21px; background: #d9d9d9; }
.quick { display: flex; align-items: center; gap: 11px; width: 147px; }
.off { opacity: .5; }
.doctabs { display: flex; flex: 1; padding-top: 2px; }
.doctab { display: flex; flex: 1; padding-right: 4px; }
.doc-name {
  flex: 1;
  gap: 4px;
  font-family: Lato, sans-serif;
  font-size: 9px;
}
.doctab.current { background: #f3f3f3; }
.account {
  display: flex;
  align-items: center;
  justify-content: space-between;
  width: 192px;
  padding: 0 9px 0 13px;
}
.new-doc { margin-right: 4px; }
.jobs { gap: 1px; }

/* Ribbon */
.ribbon {
  display: flex;
  background: #f3f3f3;
  font-family: Lato, sans-serif;
}
.workspace {
  width: 74px;
  height: 41px;
  margin: 7px 2px 0;
  border: 1px solid #dadada;
  border-radius: 2px;
  background: #f6f6f6;
  font-weight: 700;
}
.ribbon-body { flex: 1; }
.ribbon-tabs { display: flex; gap: 19px; height: 15px; padding-left: 9px; }
.ribbon-tabs button { padding: 0 8px; border-bottom: 2px solid transparent; }
.ribbon-tabs .current { border-bottom-color: #444; }
.groups { display: flex; padding: 3px 0 4px; }
.group {
  display: flex;
  flex-direction: column;
  align-items: center;
  gap: 3px;
  padding: 0 6px 0 7px;
  border-left: 1px solid #e2e2e2;
}
.group:first-child { border-left-color: transparent; }
.group.wide { padding: 0 10px; }
.tools { display: flex; gap: 7px; }

/* Viewport: panels share one grid cell over the scene */
.viewport { display: grid; flex: 1; min-height: 0; overflow: hidden; }
.viewport > * { grid-area: 1 / 1; }
.scene { width: 100%; height: 100%; min-height: 0; }

.browser { align-self: start; justify-self: start; width: 198px; padding-top: 2px; }
.panel-head {
  display: flex;
  align-items: center;
  height: 17px;
  padding: 0 7px 0 3px;
  border: 1px solid #ececec;
  border-left: 0;
  background: #f3f3f3;
}
.panel-head h2 { font-family: Lato, sans-serif; font-size: 8px; }
.grip { width: 4px; height: 2px; margin-right: 37px; border: solid #888; border-width: 0 1px; }
.tree { margin: 0; padding: 2px 0 0; list-style: none; }
.tree li { display: flex; align-items: center; gap: 4px; height: 16px; padding-left: 20px; }
.tree li > button { margin-right: 3px; }
.tree li.root { padding-left: 8px; font-weight: 700; }
.chip {
  display: flex;
  align-items: center;
  gap: 8px;
  padding: 1px 20px 1px 4px;
  background: #f7f7f7;
  color: #444;
}
.root .chip { margin-left: 1px; padding: 1px 16px 1px 0; background: #dedede; }
.down { transform: rotate(90deg); }
.activate { display: flex; }
.activate input {
  appearance: none;
  width: 9px;
  height: 9px;
  margin: 0;
  border: 1px solid #555;
  border-radius: 50%;
  background: radial-gradient(#333 0 2px, #fff 2px);
}

.banner {
  display: flex;
  align-items: center;
  align-self: start;
  justify-self: center;
  height: 15px;
  margin: 3px 7px 0 0;
  padding: 0 17px 0 5px;
  background: #f7f7f7;
}
.banner strong { margin: 0 20px 0 4px; }
.banner a { margin-left: 48px; color: #2e75b5; text-decoration: none; }

.viewcube { align-self: start; justify-self: end; width: 64px; height: 64px; margin: 10px 8px 0 0; }
.cube-face { fill: #8b8b90; font-weight: 700; font-size: 8px; text-anchor: middle; }
.cube-z { fill: #7068d6; font-size: 9px; text-anchor: middle; }
.cube-x { fill: #e07878; font-size: 9px; text-anchor: middle; }

.comments { align-self: end; justify-self: start; width: 198px; margin-bottom: 2px; padding-left: 16px; }
.navtools {
  display: flex;
  align-items: center;
  align-self: end;
  justify-self: center;
  gap: 5px;
  height: 16px;
  margin: 0 4px 4px 0;
  background: #f6f6f6;
}
.navtools .caret { margin-left: 1px; }
.navtools .active { height: 16px; padding: 0 1px; background: #dfeffa; }

/* Timeline */
.timeline { display: flex; align-items: center; height: 32px; padding-right: 7px; background: #f3f3f3; }
.playback { display: flex; gap: 7px; }
.history { display: flex; flex-direction: column; align-items: center; margin: 5px 0 0 14px; }
.features { display: flex; gap: 4px; }
.bracket { width: 98px; height: 5px; }
.marker { width: 10px; height: 22px; margin-left: -3px; }
```
